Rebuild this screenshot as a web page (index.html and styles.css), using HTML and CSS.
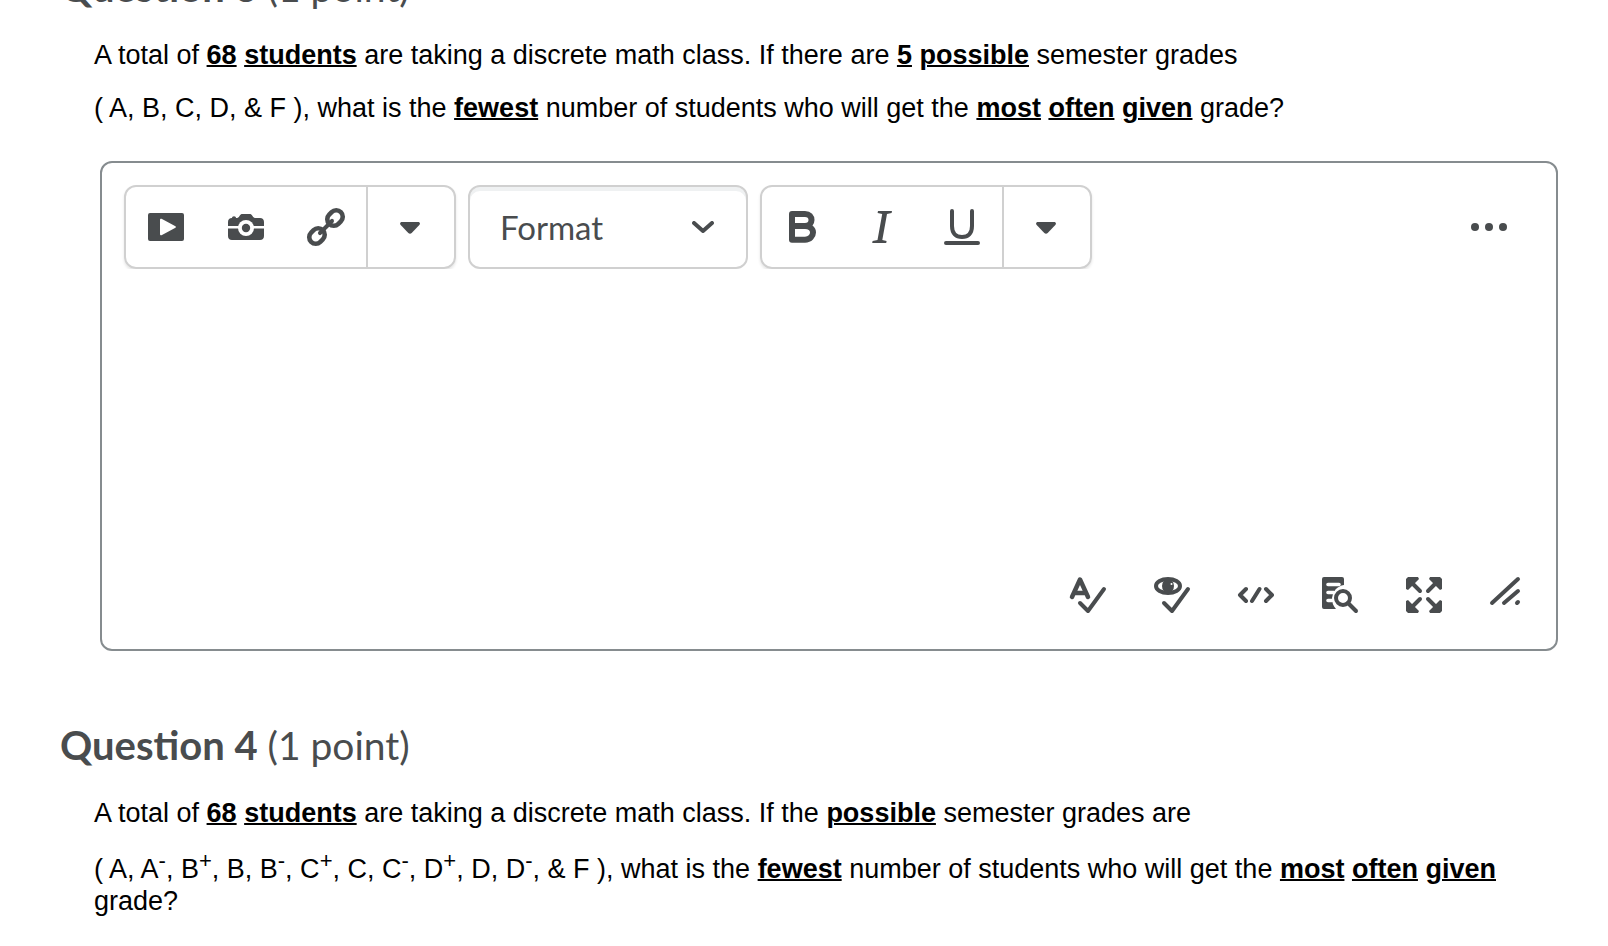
FILE: index.html
```html
<!DOCTYPE html>
<html lang="en">
<head>
  <meta charset="UTF-8" />
  <meta name="viewport" content="width=device-width, initial-scale=1.0"/>
  <title>Quiz</title>
  <link rel="stylesheet" href="styles.css">
</head>
<body>
  <main class="quiz">
    <section class="question">
      <h2>Question 3 <span class="points">(1 point)</span></h2>
      <div class="question-text">
        <p>A total of <b>68</b> <b>students</b> are taking a discrete math class. If there are <b>5</b> <b>possible</b> semester grades</p>
        <p>( A, B, C, D, &amp; F ), what is the <b>fewest</b> number of students who will get the <b>most</b> <b>often</b> <b>given</b> grade?</p>
      </div>

      <div class="editor">
        <div class="toolbar">
          <div class="group">
            <button type="button" aria-label="Insert Stuff">
              <svg class="icon" viewBox="0 0 36 36"><path fill-rule="evenodd" d="M2 4h32a2 2 0 0 1 2 2v24a2 2 0 0 1-2 2H2a2 2 0 0 1-2-2V6a2 2 0 0 1 2-2zM14 10c-1.200-.6-2 0-2 1v14c0 1 .8 1.600 2 1l13-7c1.300-.7 1.300-1.300 0-2z"/></svg>
            </button>
            <button type="button" aria-label="Insert Image">
              <svg class="icon" viewBox="0 0 36 36"><path d="M0 17v-4c0-2.500 1.500-4 4-4 0-1 .8-1.700 2-1.700S8 8 8 9c2 0 2.500-.5 3.500-2S13 5 14.500 5h7c1.500 0 2 .5 3 2s1.500 2 3.500 2h4c2.500 0 4 1.500 4 4v4zM0 19.500h36V27c0 2.500-1.500 4-4 4H4c-2.500 0-4-1.500-4-4z"/><circle cx="18" cy="19" r="8" fill="#fff"/><circle cx="18" cy="19" r="4.200"/></svg>
            </button>
            <button type="button" aria-label="Insert Quicklink">
              <svg class="icon line" viewBox="0 0 36 36"><g transform="rotate(-45 18 18)" stroke-width="4.600"><rect x="-3" y="11.500" width="16.500" height="13" rx="6.500"/><rect x="22.500" y="11.500" width="16.500" height="13" rx="6.500"/><path d="M9.500 18h17" stroke-width="4"/></g></svg>
            </button>
            <button type="button" class="more" aria-label="More insert options">
              <svg class="caret" viewBox="0 0 20 12"><path d="M2 0h16c2 0 2.500 1.600 1.300 3l-7.600 8c-1 1-2.400 1-3.400 0L.7 3C-.5 1.600 0 0 2 0z"/></svg>
            </button>
          </div>

          <div class="format">
            <select aria-label="Format">
              <option>Format</option>
            </select>
            <svg class="chevron line" viewBox="0 0 22 12"><path d="M2 2l9 8 9-8" stroke-width="4"/></svg>
          </div>

          <div class="group">
            <button type="button" aria-label="Bold">
              <svg class="icon line" viewBox="0 0 36 36"><path d="M8 5h13c4.500 0 6.500 2.800 6.500 6s-2 6-6.500 6H8zM8 17h13c5 0 8 3 8 6.500s-3 7.200-8 7.200H8z" stroke-width="6"/></svg>
            </button>
            <button type="button" aria-label="Italic">
              <svg class="icon" viewBox="0 0 36 36"><path d="M14 2h14l-.4 2-4.600 1-4.700 26 4.300 1-.4 2h-14l.4-2 4.900-1L18.200 5l-4.600-1z"/></svg>
            </button>
            <button type="button" aria-label="Underline">
              <svg class="icon line" viewBox="0 0 36 36"><path d="M8 2v15c0 7.500 4 11 10 11s10-3.500 10-11V2M2 34h32" stroke-width="4"/></svg>
            </button>
            <button type="button" class="more" aria-label="More text options">
              <svg class="caret" viewBox="0 0 20 12"><path d="M2 0h16c2 0 2.500 1.600 1.300 3l-7.600 8c-1 1-2.400 1-3.400 0L.7 3C-.5 1.600 0 0 2 0z"/></svg>
            </button>
          </div>

          <button type="button" class="actions" aria-label="More actions">
            <svg class="icon" viewBox="0 0 36 36"><circle cx="4" cy="18" r="4"/><circle cx="18" cy="18" r="4"/><circle cx="32" cy="18" r="4"/></svg>
          </button>
        </div>

        <textarea aria-label="Answer"></textarea>

        <div class="footer">
          <button type="button" aria-label="Check Spelling">
            <svg class="icon line" viewBox="0 0 36 36"><path d="M2 20L10 2.500 18 20M5 16h10" stroke-width="4.500"/><path d="M10 26l8 8 16-22" stroke-width="4"/></svg>
          </button>
          <button type="button" aria-label="Check Accessibility">
            <svg class="icon line" viewBox="0 0 36 36"><ellipse cx="14" cy="9" rx="12" ry="7" stroke-width="4"/><ellipse cx="14" cy="9" rx="6" ry="7" class="solid"/><circle cx="17.500" cy="7" r="1" fill="#fff" stroke="none"/><path d="M10 26l8 8 16-22" stroke-width="4"/></svg>
          </button>
          <button type="button" aria-label="HTML Source Editor">
            <svg class="icon line" viewBox="0 0 36 36"><path d="M8 12l-6 6 6 6M28 12l6 6-6 6M21.500 12l-7.500 12" stroke-width="4"/></svg>
          </button>
          <button type="button" aria-label="Preview">
            <svg class="icon line" viewBox="0 0 36 36"><path class="solid" d="M2 0h18a2 2 0 0 1 2 2v6a14 14 0 0 0-12 13c0 4 1 8 4 11H2a2 2 0 0 1-2-2V2a2 2 0 0 1 2-2z"/><path d="M6 7.500h11M6 15.500h6M6 23.500h4" stroke="#fff" stroke-width="3.600"/><circle cx="21" cy="21" r="7" stroke-width="4"/><path d="M26 26l8 8" stroke-width="4"/></svg>
          </button>
          <button type="button" aria-label="Toggle Fullscreen">
            <svg class="icon line" viewBox="0 0 36 36"><path class="solid" d="M2 0h10l1 2-11 11-2-1V2zM34 0H24l-1 2 11 11 2-1V2zM2 36h10l1-2L2 23l-2 1v10zM34 36H24l-1-2 11-11 2 1v10z"/><path d="M5 5l9 9M31 5l-9 9M5 31l9-9M31 31l-9-9" stroke-width="4"/></svg>
          </button>
          <button type="button" aria-label="Resize editor">
            <svg class="icon line" viewBox="0 0 36 36"><path d="M2 26L28 2M14 26l14-12M27 26l1-1" stroke-width="4"/></svg>
          </button>
        </div>
      </div>
    </section>

    <section class="question">
      <h2>Question 4 <span class="points">(1 point)</span></h2>
      <div class="question-text">
        <p>A total of <b>68</b> <b>students</b> are taking a discrete math class. If the <b>possible</b> semester grades are</p>
        <p>( A, A<sup>-</sup>, B<sup>+</sup>, B, B<sup>-</sup>, C<sup>+</sup>, C, C<sup>-</sup>, D<sup>+</sup>, D, D<sup>-</sup>, &amp; F ), what is the <b>fewest</b> number of students who will get the <b>most</b> <b>often</b> <b>given</b> grade?</p>
      </div>
    </section>
  </main>
</body>
</html>
```

FILE: styles.css
```css
* {
  box-sizing: border-box;
}

body {
  margin: 0;
  background-color: #fff;
  color: #494c4e;
  font-family: Lato, sans-serif;
}

/* the first heading is scrolled partly out of view */
.quiz {
  margin-top: -37px;
  padding: 0 50px 0 60px;
}

.question {
  margin-bottom: 70px;
}

.question:last-child {
  margin-bottom: 0;
}

h2 {
  margin: 0 0 28px;
  font-size: 40px;
  line-height: 48px;
  font-weight: bold;
}

.points {
  font-size: 39px;
  font-weight: normal;
}

.question-text {
  margin: 0 0 37px 34px;
  color: #000;
  font-family: "Liberation Sans", Arial, sans-serif;
  font-size: 27px;
  line-height: 32px;
}

.question:last-child .question-text {
  margin-bottom: 0;
}

.question-text p {
  margin: 0 0 21px;
}

.question-text p:last-child {
  margin-bottom: 0;
}

.question-text b {
  text-decoration: underline;
  text-decoration-thickness: 2px;
}

sup {
  font-size: 22px;
  line-height: 22px;
}

.editor {
  display: flex;
  flex-direction: column;
  margin-left: 40px;
  border: 2px solid #868c8f;
  border-radius: 12px;
}

.toolbar {
  display: flex;
  gap: 12px;
  padding: 22px 22px 0;
}

.group {
  display: flex;
  border: 2px solid #d0d0d0;
  border-radius: 12px;
  box-shadow: 0 2px 3px rgba(0, 0, 0, 0.1);
}

button {
  display: flex;
  align-items: center;
  justify-content: center;
  width: 80px;
  height: 80px;
  padding: 0;
  border: none;
  background: none;
  color: #494c4e;
  cursor: pointer;
}

button.more {
  width: 88px;
  padding: 2px 2px 0 0;
  border-left: 2px solid #d0d0d0;
}

button.actions {
  width: 90px;
  height: 84px;
  margin-left: auto;
}

svg {
  fill: currentColor;
}

.icon {
  width: 36px;
  height: 36px;
  overflow: visible;
}

.caret {
  width: 20px;
  height: 12px;
}

.line {
  fill: none;
  stroke: currentColor;
  stroke-linecap: round;
  stroke-linejoin: round;
}

.line .solid {
  fill: currentColor;
  stroke: none;
}

.format {
  display: grid;
  align-items: center;
  width: 280px;
}

.format select,
.format svg {
  grid-area: 1 / 1;
}

.format select {
  width: 100%;
  height: 84px;
  padding: 0 30px;
  border: 2px solid #d0d0d0;
  border-radius: 12px;
  background-color: #fff;
  box-shadow: inset 0 4px 0 #eff1f2;
  color: #494c4e;
  font-family: inherit;
  font-size: 33px;
  appearance: none;
}

.chevron {
  justify-self: end;
  width: 22px;
  height: 12px;
  margin-right: 34px;
  pointer-events: none;
}

textarea {
  height: 284px;
  margin: 0 22px;
  padding: 20px;
  border: none;
  outline: none;
  resize: none;
  font: inherit;
}

.footer {
  display: flex;
  justify-content: flex-end;
  padding: 0 6px 12px;
}

.footer button {
  width: 84px;
  height: 84px;
}
```
